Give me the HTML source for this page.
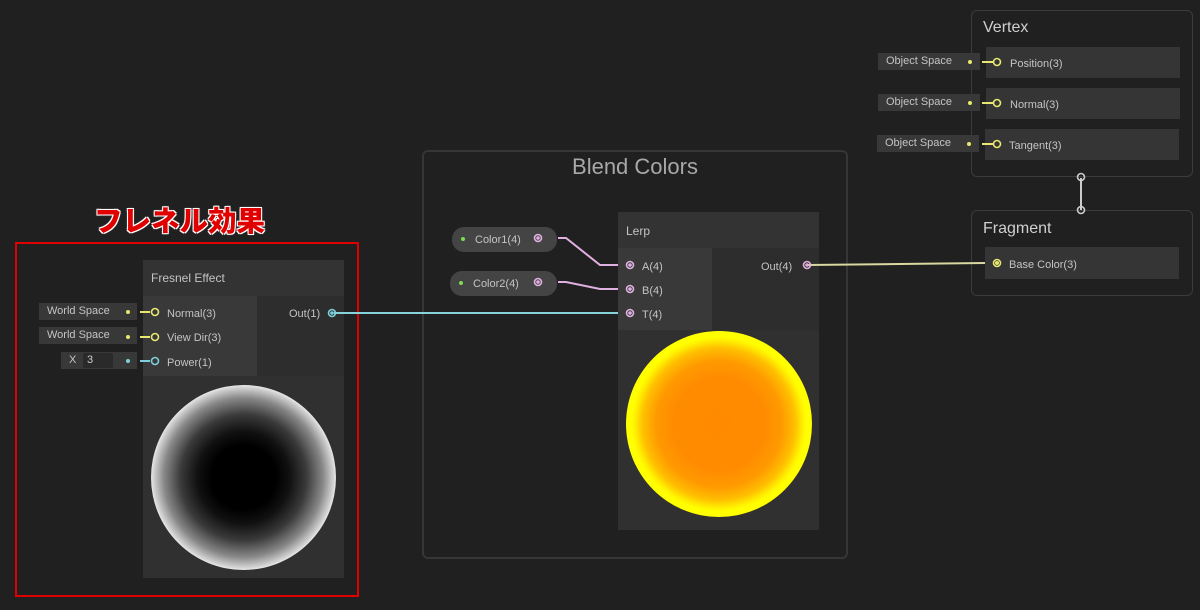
<!DOCTYPE html><html><head><meta charset="utf-8"><style>
*{margin:0;padding:0;box-sizing:border-box}
body{width:1200px;height:610px;background:#202020;position:relative;overflow:hidden;font-family:"Liberation Sans",sans-serif;color:#c8c8c8}
.a{position:absolute}
.t{font-size:11px;color:#c4c4c4;white-space:nowrap}
.fld{position:absolute;background:#383838;font-size:11px;color:#c4c4c4;padding-left:8px;line-height:17px}
</style></head><body>
<div class="a" style="left:422px;top:150px;width:426px;height:409px;border:2px solid #363636;border-radius:6px"></div>
<div class="a" style="left:422px;top:154px;width:426px;text-align:center;font-size:22px;color:#a8a8a8">Blend Colors</div>
<div class="a" style="left:94px;top:199px;font-family:'Liberation Sans','Noto Sans CJK JP',sans-serif;font-weight:900;font-size:28.5px;color:#e00000;text-shadow:0 0 2px #fff,1px 1px 0 #fff,-1px -1px 0 #fff,1px -1px 0 #fff,-1px 1px 0 #fff">フレネル効果</div>
<div class="a" style="left:15px;top:242px;width:344px;height:355px;border:2px solid #e00000"></div>
<div class="a" style="left:143px;top:260px;width:201px;height:318px;background:#2c2c2c"></div>
<div class="a" style="left:143px;top:260px;width:201px;height:36px;background:#333"></div>
<div class="a t" style="left:151px;top:271px;font-size:12px">Fresnel Effect</div>
<div class="a" style="left:143px;top:296px;width:114px;height:80px;background:#393939"></div>
<div class="a" style="left:257px;top:296px;width:87px;height:80px;background:#2d2d2d"></div>
<div class="a" style="left:143px;top:376px;width:201px;height:202px;background:#303030"></div>
<div class="a" style="left:151px;top:385px;width:185px;height:185px;border-radius:50%;background:radial-gradient(circle closest-side,#000 0%,#000 35%,#111 50%,#3a3a3a 68%,#888 86%,#d0d0d0 97%,#e8e8e8 100%)"></div>
<div class="a t" style="left:167px;top:308px">Normal(3)</div>
<div class="a t" style="left:167px;top:332px">View Dir(3)</div>
<div class="a t" style="left:167px;top:357px">Power(1)</div>
<div class="a t" style="left:289px;top:308px">Out(1)</div>
<div class="fld" style="left:39px;top:303px;width:98px">World Space</div>
<div class="fld" style="left:39px;top:327px;width:98px">World Space</div>
<div class="fld" style="left:61px;top:352px;width:76px">X</div>
<div class="a" style="left:83px;top:353px;width:30px;height:15px;background:#2a2a2a;border-radius:2px;font-size:11px;line-height:15px;padding-left:4px;color:#ccc">3</div>
<div class="a" style="left:618px;top:212px;width:201px;height:318px;background:#2c2c2c"></div>
<div class="a" style="left:618px;top:212px;width:201px;height:36px;background:#333"></div>
<div class="a t" style="left:626px;top:224px;font-size:12px">Lerp</div>
<div class="a" style="left:618px;top:248px;width:94px;height:82px;background:#393939"></div>
<div class="a" style="left:712px;top:248px;width:107px;height:82px;background:#2d2d2d"></div>
<div class="a" style="left:618px;top:330px;width:201px;height:200px;background:#303030"></div>
<div class="a" style="left:626px;top:331px;width:186px;height:186px;border-radius:50%;background:radial-gradient(circle closest-side,#ff8a00 0%,#ff8c00 50%,#ff9a00 68%,#ffc000 82%,#ffee00 90%,#ffff00 94%,#ffff00 100%)"></div>
<div class="a t" style="left:642px;top:261px">A(4)</div>
<div class="a t" style="left:642px;top:285px">B(4)</div>
<div class="a t" style="left:642px;top:309px">T(4)</div>
<div class="a t" style="left:761px;top:261px">Out(4)</div>
<div class="a" style="left:452px;top:227px;width:105px;height:25px;border-radius:12px;background:#444"></div>
<div class="a t" style="left:475px;top:234px">Color1(4)</div>
<div class="a" style="left:450px;top:271px;width:107px;height:25px;border-radius:12px;background:#444"></div>
<div class="a t" style="left:473px;top:278px">Color2(4)</div>
<div class="a" style="left:971px;top:10px;width:222px;height:167px;border:1px solid #3c3c3c;border-radius:6px"></div>
<div class="a" style="left:983px;top:19px;font-size:16px;color:#cfcfcf">Vertex</div>
<div class="a" style="left:986px;top:47px;width:194px;height:31px;background:#353535"></div>
<div class="a" style="left:986px;top:88px;width:194px;height:31px;background:#353535"></div>
<div class="a" style="left:985px;top:129px;width:194px;height:31px;background:#353535"></div>
<div class="a t" style="left:1010px;top:58px">Position(3)</div>
<div class="a t" style="left:1010px;top:99px">Normal(3)</div>
<div class="a t" style="left:1009px;top:140px">Tangent(3)</div>
<div class="fld" style="left:878px;top:53px;width:102px">Object Space</div>
<div class="fld" style="left:878px;top:94px;width:102px">Object Space</div>
<div class="fld" style="left:877px;top:135px;width:102px">Object Space</div>
<div class="a" style="left:971px;top:210px;width:222px;height:86px;border:1px solid #3c3c3c;border-radius:6px"></div>
<div class="a" style="left:983px;top:220px;font-size:16px;color:#cfcfcf">Fragment</div>
<div class="a" style="left:985px;top:247px;width:194px;height:32px;background:#353535"></div>
<div class="a t" style="left:1009px;top:259px">Base Color(3)</div>
<svg class="a" style="left:0;top:0" width="1200" height="610">
<g fill="none" stroke-width="2">
<path d="M334 313 L618 313" stroke="#88d2dc"/>
<path d="M558 238 L566 238 L600 265 L618 265" stroke="#e0b0e0"/>
<path d="M558 282 L566 282 L600 289 L618 289" stroke="#e0b0e0"/>
<path d="M808 265 L985 263" stroke="#d8d8a0"/>
<path d="M140 312 L150 312" stroke="#e8e870"/>
<path d="M140 337 L150 337" stroke="#e8e870"/>
<path d="M140 361 L150 361" stroke="#7ed0dc"/>
<path d="M982 62 L994 62" stroke="#e8e870"/><path d="M982 103 L994 103" stroke="#e8e870"/><path d="M982 144 L994 144" stroke="#e8e870"/>
<path d="M1081 178 L1081 210" stroke="#ccc"/>
</g>
<g fill="none" stroke-width="1.6">
<circle cx="155" cy="312" r="3.5" stroke="#e8e870"/><circle cx="155" cy="337" r="3.5" stroke="#e8e870"/><circle cx="155" cy="361" r="3.5" stroke="#7ed0dc"/>
<circle cx="997" cy="62" r="3.5" stroke="#e8e870"/><circle cx="997" cy="103" r="3.5" stroke="#e8e870"/><circle cx="997" cy="144" r="3.5" stroke="#e8e870"/>
<circle cx="1081" cy="177" r="3.5" stroke="#ccc"/><circle cx="1081" cy="210" r="3.5" stroke="#ccc"/>
<circle cx="332" cy="313" r="3.5" stroke="#7ed0dc"/>
<circle cx="630" cy="265" r="3.5" stroke="#e0b0e0"/><circle cx="630" cy="289" r="3.5" stroke="#e0b0e0"/><circle cx="630" cy="313" r="3.5" stroke="#e0b0e0"/>
<circle cx="807" cy="265" r="3.5" stroke="#e0b0e0"/><circle cx="538" cy="238" r="3.5" stroke="#e0b0e0"/><circle cx="538" cy="282" r="3.5" stroke="#e0b0e0"/>
<circle cx="997" cy="263" r="3.5" stroke="#e8e870"/>
</g>
<g>
<circle cx="332" cy="313" r="1.8" fill="#7ed0dc"/>
<circle cx="630" cy="265" r="1.8" fill="#e0b0e0"/><circle cx="630" cy="289" r="1.8" fill="#e0b0e0"/><circle cx="630" cy="313" r="1.8" fill="#e0b0e0"/>
<circle cx="807" cy="265" r="1.8" fill="#e0b0e0"/><circle cx="538" cy="238" r="1.8" fill="#e0b0e0"/><circle cx="538" cy="282" r="1.8" fill="#e0b0e0"/>
<circle cx="997" cy="263" r="2" fill="#e8e870"/>
<circle cx="463" cy="239" r="2" fill="#7fdc50"/><circle cx="461" cy="283" r="2" fill="#7fdc50"/>
<circle cx="128" cy="312" r="2" fill="#e8e870"/><circle cx="128" cy="337" r="2" fill="#e8e870"/><circle cx="128" cy="361" r="2" fill="#7ed0dc"/>
<circle cx="970" cy="62" r="2" fill="#e8e870"/><circle cx="970" cy="103" r="2" fill="#e8e870"/><circle cx="969" cy="144" r="2" fill="#e8e870"/>
</g>
</svg>
</body></html>
